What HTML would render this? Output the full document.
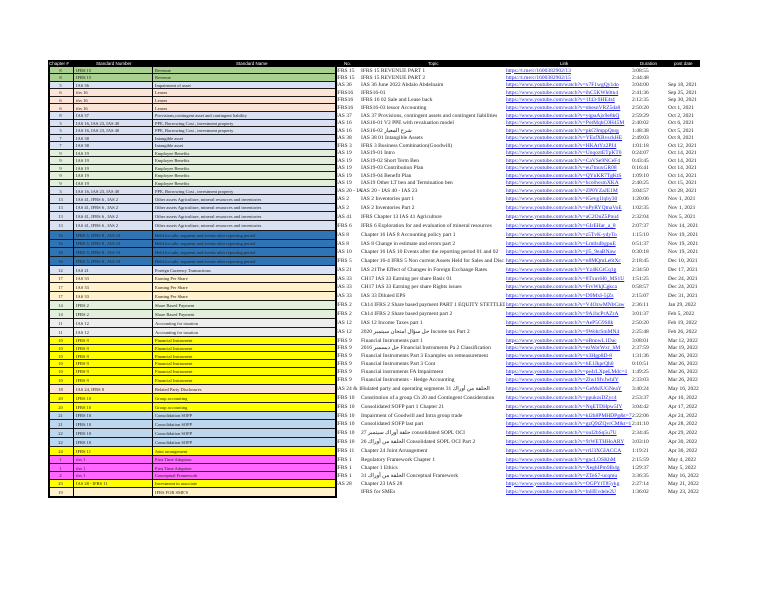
<!DOCTYPE html>
<html><head><meta charset="utf-8"><style>
html,body{margin:0;padding:0;background:#fff;width:768px;height:594px;overflow:hidden;position:relative;font-family:"Liberation Serif","Noto Sans CJK SC",serif;}
.hd{position:absolute;left:48px;top:60px;width:652px;height:7px;background:#000;color:#fff;font-size:4.5px;line-height:7px;font-family:"Liberation Sans",sans-serif}
.hd span{position:absolute;top:0}
.r{position:absolute;left:0;width:768px;font-size:5.5px;color:#222;white-space:nowrap}
.r>*{position:absolute;top:0;height:100%;display:flex;align-items:center;font-weight:normal;font-style:normal;overflow:hidden}
.c{left:48px;width:288px;box-sizing:border-box;border-bottom:1px solid #1a1a1a}
.a{left:48px;width:25px;justify-content:center;font-size:4.5px}
.b{left:76px;width:74px;font-size:4.5px}
.n{left:155px;width:180px;font-size:4.5px}
.no{left:336px;width:26px}
.t{left:361px;width:144px}
.k{left:506px;width:126px;color:#1a1ae6;text-decoration:underline}
.d{left:632px}
.p{left:668px}
.v{position:absolute;top:67px;height:430px;width:1.5px;background:#000}
</style></head><body>
<div class="hd"><span style="left:1px">Chapter #</span><span style="left:48px">Standard Number</span><span style="left:188px">Standard Name</span><span style="left:296px">No.</span><span style="left:380px">Topic</span><span style="left:512px">Link</span><span style="left:592px">Duration</span><span style="left:626px">post date</span></div>

<div class="r" style="top:67px;height:7px"><i class="c" style="background:#a9d08e"></i><b class="a">8</b><b class="b">IFRS 15</b><b class="n">Revenue</b><b class="no">IFRS 15</b><b class="t">IFRS 15 REVENUE PART 1</b><u class="k">https://t.me/c/1600382902/13</u><b class="d">3:08:55</b><b class="p"></b></div>
<div class="r" style="top:74px;height:7.5px"><i class="c" style="background:#a9d08e"></i><b class="a">8</b><b class="b">IFRS 15</b><b class="n">Revenue</b><b class="no">IFRS 15</b><b class="t">IFRS 15 REVENUE PART 2</b><u class="k">https://t.me/c/1600382902/15</u><b class="d">2:44:48</b><b class="p"></b></div>
<div class="r" style="top:81.5px;height:7.5px"><i class="c" style="background:#d9e1f2"></i><b class="a">5</b><b class="b">IAS 36</b><b class="n">Impairment of asset</b><b class="no">IAS 36</b><b class="t">IAS 36 June 2022 Abdalo Abdelnaim</b><u class="k">https://www.youtube.com/watch?v=x7F1wgQy1do</u><b class="d">3:04:00</b><b class="p">Sep 18, 2021</b></div>
<div class="r" style="top:89px;height:7.5px"><i class="c" style="background:#fce4d6"></i><b class="a">6</b><b class="b">ifrs 16</b><b class="n">Leases</b><b class="no">IFRS16</b><b class="t">IFRS16-01</b><u class="k">https://www.youtube.com/watch?v=ihC5KWh0tn4</u><b class="d">2:41:36</b><b class="p">Sep 25, 2021</b></div>
<div class="r" style="top:96.5px;height:7.5px"><i class="c" style="background:#fce4d6"></i><b class="a">6</b><b class="b">ifrs 16</b><b class="n">Leases</b><b class="no">IFRS16</b><b class="t">IFRS 16 02 Sale and Lease back</b><u class="k">https://www.youtube.com/watch?v=1f43-9HE4t4</u><b class="d">2:12:35</b><b class="p">Sep 30, 2021</b></div>
<div class="r" style="top:104px;height:8px"><i class="c" style="background:#fce4d6"></i><b class="a">6</b><b class="b">ifrs 16</b><b class="n">Leases</b><b class="no">IFRS16</b><b class="t">IFRS16-03 lessor Accounting</b><u class="k">https://www.youtube.com/watch?v=nbesnVRZ5da8</u><b class="d">2:50:20</b><b class="p">Oct 1, 2021</b></div>
<div class="r" style="top:112px;height:7.5px"><i class="c" style="background:#d9e1f2"></i><b class="a">8</b><b class="b">IAS 37</b><b class="n">Provisions,contingent asset and contingent liability</b><b class="no">IAS 37</b><b class="t">IAS 37 Provisions, contingent assets and contingent liabilities</b><u class="k">https://www.youtube.com/watch?v=yqpaAjx9e8kQ</u><b class="d">2:59:29</b><b class="p">Oct 2, 2021</b></div>
<div class="r" style="top:119.5px;height:7.5px"><i class="c" style="background:#d9e1f2"></i><b class="a">3</b><b class="b">IAS 16, IAS 23, IAS 40</b><b class="n">PPE, Borrowing Cost , investment property</b><b class="no">IAS 16</b><b class="t">IAS16-01 V2 PPE with revaluation model</b><u class="k">https://www.youtube.com/watch?v=PotMqhC0H45M</u><b class="d">2:40:02</b><b class="p">Oct 6, 2021</b></div>
<div class="r" style="top:127px;height:7.5px"><i class="c" style="background:#d9e1f2"></i><b class="a">3</b><b class="b">IAS 16, IAS 23, IAS 40</b><b class="n">PPE, Borrowing Cost , investment property</b><b class="no">IAS 16</b><b class="t">IAS16-02 شرح المعيار</b><u class="k">https://www.youtube.com/watch?v=pkG9mppQnrg</u><b class="d">1:48:38</b><b class="p">Oct 5, 2021</b></div>
<div class="r" style="top:134.5px;height:7.5px"><i class="c" style="background:#d9e1f2"></i><b class="a">7</b><b class="b">IAS 38</b><b class="n">Intangible asset</b><b class="no">IAS 38</b><b class="t">IAS 38 01 Intangible Assets</b><u class="k">https://www.youtube.com/watch?v=YEsfXRvsckHE</u><b class="d">2:49:03</b><b class="p">Oct 8, 2021</b></div>
<div class="r" style="top:142px;height:7.5px"><i class="c" style="background:#d9e1f2"></i><b class="a">7</b><b class="b">IAS 38</b><b class="n">Intangible asset</b><b class="no">IFRS 3</b><b class="t">IFRS 3 Business Combination(Goodwill)</b><u class="k">https://www.youtube.com/watch?v=HKAtYz2PJ4</u><b class="d">1:01:18</b><b class="p">Oct 12, 2021</b></div>
<div class="r" style="top:149.5px;height:7.5px"><i class="c" style="background:#e2efda"></i><b class="a">9</b><b class="b">IAS 19</b><b class="n">Employee Benefits</b><b class="no">IAS 19</b><b class="t">IAS19-01 Intro</b><u class="k">https://www.youtube.com/watch?v=UnqoztETpKT0</u><b class="d">0:24:07</b><b class="p">Oct 14, 2021</b></div>
<div class="r" style="top:157px;height:7.5px"><i class="c" style="background:#e2efda"></i><b class="a">9</b><b class="b">IAS 19</b><b class="n">Employee Benefits</b><b class="no">IAS 19</b><b class="t">IAS19-02 Short Term Ben</b><u class="k">https://www.youtube.com/watch?v=CaVSe9NCeF4</u><b class="d">0:43:45</b><b class="p">Oct 14, 2021</b></div>
<div class="r" style="top:164.5px;height:7.5px"><i class="c" style="background:#e2efda"></i><b class="a">9</b><b class="b">IAS 19</b><b class="n">Employee Benefits</b><b class="no">IAS 19</b><b class="t">IAS19-03 Contribution Plan</b><u class="k">https://www.youtube.com/watch?v=eu7tnuxGR08</u><b class="d">0:16:41</b><b class="p">Oct 14, 2021</b></div>
<div class="r" style="top:172px;height:7.5px"><i class="c" style="background:#e2efda"></i><b class="a">9</b><b class="b">IAS 19</b><b class="n">Employee Benefits</b><b class="no">IAS 19</b><b class="t">IAS19-04 Benefit Plan</b><u class="k">https://www.youtube.com/watch?v=QYnKR7TgKtS</u><b class="d">1:09:10</b><b class="p">Oct 14, 2021</b></div>
<div class="r" style="top:179.5px;height:7.5px"><i class="c" style="background:#e2efda"></i><b class="a">9</b><b class="b">IAS 19</b><b class="n">Employee Benefits</b><b class="no">IAS 19</b><b class="t">IAS19 Other LT ben and Termination ben</b><u class="k">https://www.youtube.com/watch?v=hco0wsmXKA</u><b class="d">2:40:25</b><b class="p">Oct 15, 2021</b></div>
<div class="r" style="top:187px;height:8px"><i class="c" style="background:#d9e1f2"></i><b class="a">3</b><b class="b">IAS 16, IAS 23, IAS 40</b><b class="n">PPE, Borrowing Cost , investment property</b><b class="no">IAS 20 - IAS</b><b class="t">IAS 20 - IAS 40 - IAS 23</b><u class="k">https://www.youtube.com/watch?v=ZP0YZaJE1M</u><b class="d">3:04:57</b><b class="p">Oct 28, 2021</b></div>
<div class="r" style="top:195px;height:8.5px"><i class="c" style="background:#d9e1f2"></i><b class="a">13</b><b class="b">IAS 41, IFRS 6 , IAS 2</b><b class="n">Other assets Agriculture, mineral resources and inventories</b><b class="no">IAS 2</b><b class="t">IAS 2 Inventories part 1</b><u class="k">https://www.youtube.com/watch?v=iGevg1lqby30</u><b class="d">1:20:06</b><b class="p">Nov 1, 2021</b></div>
<div class="r" style="top:203.5px;height:8.5px"><i class="c" style="background:#d9e1f2"></i><b class="a">13</b><b class="b">IAS 41, IFRS 6 , IAS 2</b><b class="n">Other assets Agriculture, mineral resources and inventories</b><b class="no">IAS 2</b><b class="t">IAS 2 Inventories Part 2</b><u class="k">https://www.youtube.com/watch?v=nPyRYQtnaVoE</u><b class="d">1:02:35</b><b class="p">Nov 1, 2021</b></div>
<div class="r" style="top:212px;height:9px"><i class="c" style="background:#d9e1f2"></i><b class="a">13</b><b class="b">IAS 41, IFRS 6 , IAS 2</b><b class="n">Other assets Agriculture, mineral resources and inventories</b><b class="no">IAS 41</b><b class="t">IFRS Chapter 13 IAS 41 Agriculture</b><u class="k">https://www.youtube.com/watch?v=aC2OuZ5Pnu4</u><b class="d">2:32:04</b><b class="p">Nov 5, 2021</b></div>
<div class="r" style="top:221px;height:9.5px"><i class="c" style="background:#d9e1f2"></i><b class="a">13</b><b class="b">IAS 41, IFRS 6 , IAS 2</b><b class="n">Other assets Agriculture, mineral resources and inventories</b><b class="no">IFRS 6</b><b class="t">IFRS 6 Exploration for and evaluation of mineral resources</b><u class="k">https://www.youtube.com/watch?v=GIrEHar_a_8</u><b class="d">2:07:37</b><b class="p">Nov 14, 2021</b></div>
<div class="r" style="top:230.5px;height:9px"><i class="c" style="background:#2f75b5"></i><b class="a">16</b><b class="b">IFRS 5, IFRS 8 , IAS 10</b><b class="n">Held for sale, segment and events after reporting period</b><b class="no">IAS 8</b><b class="t">Chapter 16 IAS 8 Accounting policy part 1</b><u class="k">https://www.youtube.com/watch?v=z5TvK-ydyTo</u><b class="d">1:15:10</b><b class="p">Nov 19, 2021</b></div>
<div class="r" style="top:239.5px;height:8.5px"><i class="c" style="background:#2f75b5"></i><b class="a">16</b><b class="b">IFRS 5, IFRS 8 , IAS 10</b><b class="n">Held for sale, segment and events after reporting period</b><b class="no">IAS 8</b><b class="t">IAS 8 Change in estimate and errors part 2</b><u class="k">https://www.youtube.com/watch?v=LmtlsdbgpuE</u><b class="d">0:51:37</b><b class="p">Nov 19, 2021</b></div>
<div class="r" style="top:248px;height:8.5px"><i class="c" style="background:#2f75b5"></i><b class="a">16</b><b class="b">IFRS 5, IFRS 8 , IAS 10</b><b class="n">Held for sale, segment and events after reporting period</b><b class="no">IAS 10</b><b class="t">Chapter 16 IAS 10 Events after the reporting period 01 and 02</b><u class="k">https://www.youtube.com/watch?v=jl5_9eaBNaw</u><b class="d">0:30:18</b><b class="p">Nov 19, 2021</b></div>
<div class="r" style="top:256.5px;height:9px"><i class="c" style="background:#2f75b5"></i><b class="a">16</b><b class="b">IFRS 5, IFRS 8 , IAS 10</b><b class="n">Held for sale, segment and events after reporting period</b><b class="no">IFRS 5</b><b class="t">Chapter 16-4 IFRS 5 Non current Assets Held for Sales and Disc</b><u class="k">https://www.youtube.com/watch?v=n8MQmLe6tXc</u><b class="d">2:18:45</b><b class="p">Dec 10, 2021</b></div>
<div class="r" style="top:265.5px;height:9px"><i class="c" style="background:#d9e1f2"></i><b class="a">12</b><b class="b">IAS 21</b><b class="n">Foreign Currency Transactions</b><b class="no">IAS 21</b><b class="t">IAS 21The Effect of Changes in Foreign Exchange Rates</b><u class="k">https://www.youtube.com/watch?v=Yz4KGtCq1g</u><b class="d">2:34:50</b><b class="p">Dec 17, 2021</b></div>
<div class="r" style="top:274.5px;height:8.5px"><i class="c" style="background:#fff2cc"></i><b class="a">17</b><b class="b">IAS 33</b><b class="n">Earning Per Share</b><b class="no">IAS 33</b><b class="t">CH17 IAS 33 Earning per share Basic 01</b><u class="k">https://www.youtube.com/watch?v=8TxuvH6_MS1U</u><b class="d">1:51:25</b><b class="p">Dec 24, 2021</b></div>
<div class="r" style="top:283px;height:8.5px"><i class="c" style="background:#fff2cc"></i><b class="a">17</b><b class="b">IAS 33</b><b class="n">Earning Per Share</b><b class="no">IAS 33</b><b class="t">CH17 IAS 33 Earning per share Rights issues</b><u class="k">https://www.youtube.com/watch?v=FrvWkjCgkca</u><b class="d">0:58:57</b><b class="p">Dec 24, 2021</b></div>
<div class="r" style="top:291.5px;height:9px"><i class="c" style="background:#fff2cc"></i><b class="a">17</b><b class="b">IAS 33</b><b class="n">Earning Per Share</b><b class="no">IAS 33</b><b class="t">IAS 33 Diluted EPS</b><u class="k">https://www.youtube.com/watch?v=D9MxI-5jZs</u><b class="d">2:15:07</b><b class="p">Dec 31, 2021</b></div>
<div class="r" style="top:300.5px;height:9px"><i class="c" style="background:#e2efda"></i><b class="a">14</b><b class="b">IFRS 2</b><b class="n">Share Based Payment</b><b class="no">IFRS 2</b><b class="t">Ch14 IFRS 2 Share based payment PART 1 EQUITY STETTLED</b><u class="k">https://www.youtube.com/watch?v=V4OzwMNbCaw</u><b class="d">2:36:11</b><b class="p">Jan 29, 2022</b></div>
<div class="r" style="top:309.5px;height:9px"><i class="c" style="background:#e2efda"></i><b class="a">14</b><b class="b">IFRS 2</b><b class="n">Share Based Payment</b><b class="no">IFRS 2</b><b class="t">Ch14 IFRS 2 Share based payment part 2</b><u class="k">https://www.youtube.com/watch?v=9A1hcPrAZrA</u><b class="d">3:01:37</b><b class="p">Feb 5, 2022</b></div>
<div class="r" style="top:318.5px;height:9px"><i class="c" style="background:#ededed"></i><b class="a">11</b><b class="b">IAS 12</b><b class="n">Accounting for taxation</b><b class="no">IAS 12</b><b class="t">IAS 12 Income Taxes part 1</b><u class="k">https://www.youtube.com/watch?v=AeP5G9S8k</u><b class="d">2:50:20</b><b class="p">Feb 19, 2022</b></div>
<div class="r" style="top:327.5px;height:9px"><i class="c" style="background:#ededed"></i><b class="a">11</b><b class="b">IAS 12</b><b class="n">Accounting for taxation</b><b class="no">IAS 12</b><b class="t">2020 حل سؤال امتحان سيتمبر Income tax Part 2</b><u class="k">https://www.youtube.com/watch?v=9WehrSmMN4</u><b class="d">2:25:48</b><b class="p">Feb 26, 2022</b></div>
<div class="r" style="top:336.5px;height:8px"><i class="c" style="background:#ffff00"></i><b class="a">10</b><b class="b">IFRS 9</b><b class="n">Financial Instrument</b><b class="no">IFRS 9</b><b class="t">Financial Instruments part 1</b><u class="k">https://www.youtube.com/watch?v=oBnnwL1Dac</u><b class="d">3:08:01</b><b class="p">Mar 12, 2022</b></div>
<div class="r" style="top:344.5px;height:7.5px"><i class="c" style="background:#ffff00"></i><b class="a">10</b><b class="b">IFRS 9</b><b class="n">Financial Instrument</b><b class="no">IFRS 9</b><b class="t">2016 حل ديسمبر Financial Instruments Pa 2 Classification</b><u class="k">https://www.youtube.com/watch?v=ezWorWxr_hM</u><b class="d">2:37:59</b><b class="p">Mar 19, 2022</b></div>
<div class="r" style="top:352px;height:8px"><i class="c" style="background:#ffff00"></i><b class="a">10</b><b class="b">IFRS 9</b><b class="n">Financial Instrument</b><b class="no">IFRS 9</b><b class="t">Financial Instruments Part 3 Examples on remeasurement</b><u class="k">https://www.youtube.com/watch?v=x3Hgp8D-8</u><b class="d">1:31:36</b><b class="p">Mar 26, 2022</b></div>
<div class="r" style="top:360px;height:7.5px"><i class="c" style="background:#ffff00"></i><b class="a">10</b><b class="b">IFRS 9</b><b class="n">Financial Instrument</b><b class="no">IFRS 9</b><b class="t">Financial Instruments Part 3 Cont</b><u class="k">https://www.youtube.com/watch?v=hE1JkprQh0</u><b class="d">0:10:51</b><b class="p">Mar 26, 2022</b></div>
<div class="r" style="top:367.5px;height:8px"><i class="c" style="background:#ffff00"></i><b class="a">10</b><b class="b">IFRS 9</b><b class="n">Financial Instrument</b><b class="no">IFRS 9</b><b class="t">Financial instruments FA Impairment</b><u class="k">https://www.youtube.com/watch?v=pe4rLXpeLMdc=1</u><b class="d">1:49:25</b><b class="p">Mar 26, 2022</b></div>
<div class="r" style="top:375.5px;height:9px"><i class="c" style="background:#ffff00"></i><b class="a">10</b><b class="b">IFRS 9</b><b class="n">Financial Instrument</b><b class="no">IFRS 9</b><b class="t">Financial Instruments - Hedge Accounting</b><u class="k">https://www.youtube.com/watch?v=Zhs19fvJwhIY</u><b class="d">2:33:03</b><b class="p">Mar 26, 2022</b></div>
<div class="r" style="top:384.5px;height:9px"><i class="c" style="background:#fce4d6"></i><b class="a">18</b><b class="b">IAS 24, IFRS 8</b><b class="n">Related Party Disclosures</b><b class="no">IAS 24 &amp; 1</b><b class="t">Hulated party and operating segments 31 الحلقة من أوراك</b><u class="k">https://www.youtube.com/watch?v=GeMsIUGNeaY</u><b class="d">3:40:24</b><b class="p">May 16, 2022</b></div>
<div class="r" style="top:393.5px;height:9px"><i class="c" style="background:#ffff00"></i><b class="a">20</b><b class="b">IFRS 10</b><b class="n">Group accounting</b><b class="no">IFRS 10</b><b class="t">Constitution of a group Ch 20 and Contingent Consideration</b><u class="k">https://www.youtube.com/watch?v=ppukzsDZyc4</u><b class="d">2:53:37</b><b class="p">Apr 10, 2022</b></div>
<div class="r" style="top:402.5px;height:9px"><i class="c" style="background:#ffff00"></i><b class="a">20</b><b class="b">IFRS 10</b><b class="n">Group accounting</b><b class="no">IFRS 10</b><b class="t">Consolidated SOFP part 1 Chapter 21</b><u class="k">https://www.youtube.com/watch?v=NqETDHpw5IY</u><b class="d">3:04:42</b><b class="p">Apr 17, 2022</b></div>
<div class="r" style="top:411.5px;height:8.5px"><i class="c" style="background:#bdd7ee"></i><b class="a">21</b><b class="b">IFRS 10</b><b class="n">Consolidation SOFP</b><b class="no">IFRS 10</b><b class="t">Impairment of Goodwill and Intra group trade</b><u class="k">https://www.youtube.com/watch?v=kl2h8PMHDPg&amp;t=7</u><b class="d">2:22:06</b><b class="p">Apr 24, 2022</b></div>
<div class="r" style="top:420px;height:8.5px"><i class="c" style="background:#bdd7ee"></i><b class="a">21</b><b class="b">IFRS 10</b><b class="n">Consolidation SOFP</b><b class="no">IFRS 10</b><b class="t">Consolidated SOFP last part</b><u class="k">https://www.youtube.com/watch?v=gzQ9tZQvrCM&amp;t=1</u><b class="d">2:41:10</b><b class="p">Apr 28, 2022</b></div>
<div class="r" style="top:428.5px;height:9px"><i class="c" style="background:#bdd7ee"></i><b class="a">22</b><b class="b">IFRS 10</b><b class="n">Consolidation SOFP</b><b class="no">IFRS 10</b><b class="t">27 حلقة أوراك سيتمبر consolidated SOPL OCI</b><u class="k">https://www.youtube.com/watch?v=ouI2bSq5u7U</u><b class="d">2:34:45</b><b class="p">Apr 29, 2022</b></div>
<div class="r" style="top:437.5px;height:9px"><i class="c" style="background:#bdd7ee"></i><b class="a">22</b><b class="b">IFRS 10</b><b class="n">Consolidation SOFP</b><b class="no">IFRS 10</b><b class="t">26 الحلقة من أوراك Consolidated SOPL OCI Part 2</b><u class="k">https://www.youtube.com/watch?v=9rWETHHoARY</u><b class="d">3:03:10</b><b class="p">Apr 30, 2022</b></div>
<div class="r" style="top:446.5px;height:9px"><i class="c" style="background:#ffff00"></i><b class="a">24</b><b class="b">IFRS 11</b><b class="n">Joint arrangement</b><b class="no">IFRS 11</b><b class="t">Chapter 24 Joint Arrangement</b><u class="k">https://www.youtube.com/watch?v=rrU3XGIACCA</u><b class="d">1:19:21</b><b class="p">Apr 30, 2022</b></div>
<div class="r" style="top:455.5px;height:8.5px"><i class="c" style="background:#ff66ff"></i><b class="a">1</b><b class="b">ifrs 1</b><b class="n">First Time Adoption</b><b class="no">IFRS 1</b><b class="t">Regulatory Framework Chapter 1</b><u class="k">https://www.youtube.com/watch?v=gncLOSKhM</u><b class="d">2:15:59</b><b class="p">May 4, 2022</b></div>
<div class="r" style="top:464px;height:8px"><i class="c" style="background:#ff66ff"></i><b class="a">1</b><b class="b">ifrs 1</b><b class="n">First Time Adoption</b><b class="no">IFRS 1</b><b class="t">Chapter 1 Ethics</b><u class="k">https://www.youtube.com/watch?v=XeghIPm9Ib4g</u><b class="d">1:29:37</b><b class="p">May 5, 2022</b></div>
<div class="r" style="top:472px;height:7.5px"><i class="c" style="background:#ff66ff"></i><b class="a">2</b><b class="b">ifrs 1</b><b class="n">Conceptual Framework</b><b class="no">IFRS 1</b><b class="t">31 الحلقة من أوراك Conceptual Framework</b><u class="k">https://www.youtube.com/watch?v=ZTeS7-ucqmu</u><b class="d">3:36:35</b><b class="p">May 16, 2022</b></div>
<div class="r" style="top:479.5px;height:8px"><i class="c" style="background:#ffff00"></i><b class="a">23</b><b class="b">IAS 28 - IFRS 11</b><b class="n">Investment in associate</b><b class="no">IAS 28</b><b class="t">Chapter 23 IAS 28</b><u class="k">https://www.youtube.com/watch?v=OGPYtT85ykg</u><b class="d">2:27:14</b><b class="p">May 21, 2022</b></div>
<div class="r" style="top:487.5px;height:9.5px"><i class="c" style="background:#fff2cc"></i><b class="a">19</b><b class="b"></b><b class="n">IFRS FOR SME'S</b><b class="no"></b><b class="t">IFRS for SMEs</b><u class="k">https://www.youtube.com/watch?v=lnHEvdele2U</u><b class="d">1:36:02</b><b class="p">May 23, 2022</b></div>

<div class="v" style="left:48px"></div>
<div class="v" style="left:72.5px"></div>
<div class="v" style="left:151.5px"></div>
<div class="v" style="left:335px"></div>
<div style="position:absolute;left:48px;top:496px;width:288.5px;height:1.5px;background:#000"></div>
</body></html>
